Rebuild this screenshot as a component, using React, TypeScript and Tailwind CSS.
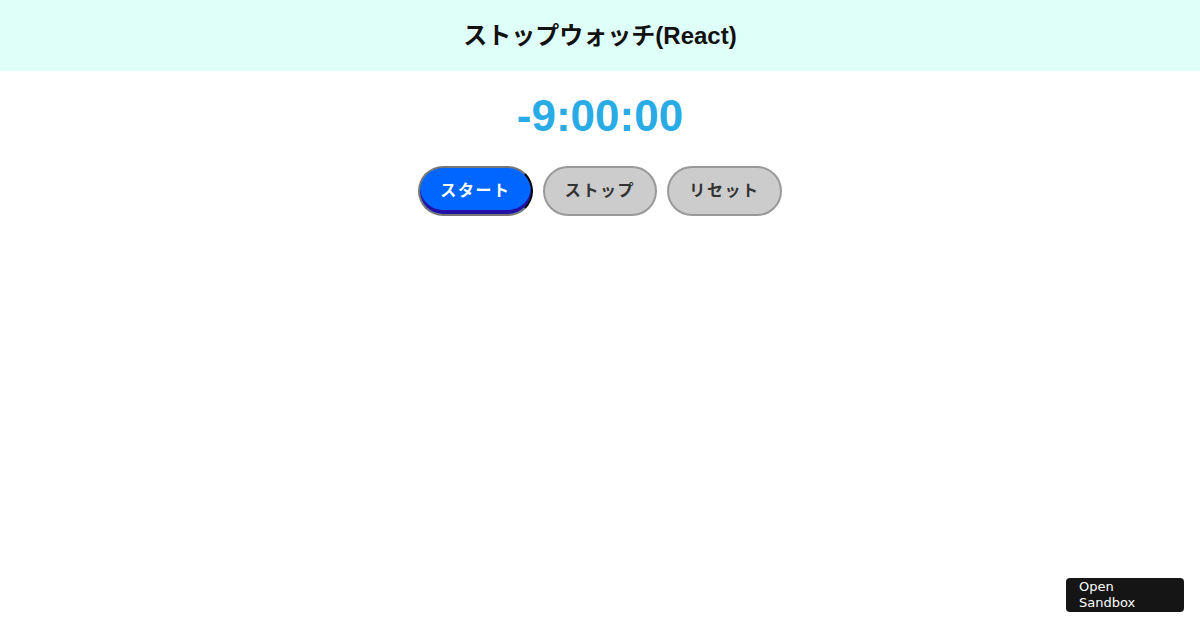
export default function App() {
  const time = "-9:00:00";

  return (
    <div className="relative h-[630px] w-full bg-white font-['Liberation_Sans','Noto_Sans_CJK_JP',sans-serif]">
      <header className="flex h-[71px] items-center justify-center bg-[#dffff9]">
        <h1 className="text-[24px] font-bold text-[#111]">ストップウォッチ(React)</h1>
      </header>

      <main className="flex flex-col items-center">
        <p className="mt-[18px] text-[44px] leading-[54px] font-bold text-[#29abe6]">{time}</p>

        <div className="mt-[23px] flex gap-[10px]">
          <button className="h-[50px] w-[115px] rounded-full border-2 border-[#777] border-r-black bg-[#0066ff] text-[16px] font-bold tracking-[0.1em] text-white shadow-[inset_0_-4px_0_#2510a6]">
            スタート
          </button>
          <button className="h-[50px] w-[114px] rounded-full border-2 border-[#999] bg-[#cccccc] text-[16px] font-bold tracking-[0.1em] text-[#333]">
            ストップ
          </button>
          <button className="h-[50px] w-[115px] rounded-full border-2 border-[#999] bg-[#cccccc] text-[16px] font-bold tracking-[0.1em] text-[#333]">
            リセット
          </button>
        </div>
      </main>

      {/* sandbox badge pinned to the corner */}
      <a className="absolute right-[16px] bottom-[18px] flex h-[34px] w-[118px] items-center rounded-[4px] bg-[#151515] px-[13px] font-['DejaVu_Sans',sans-serif] text-[13px] leading-[16px] text-white">
        Open Sandbox
      </a>
    </div>
  );
}
